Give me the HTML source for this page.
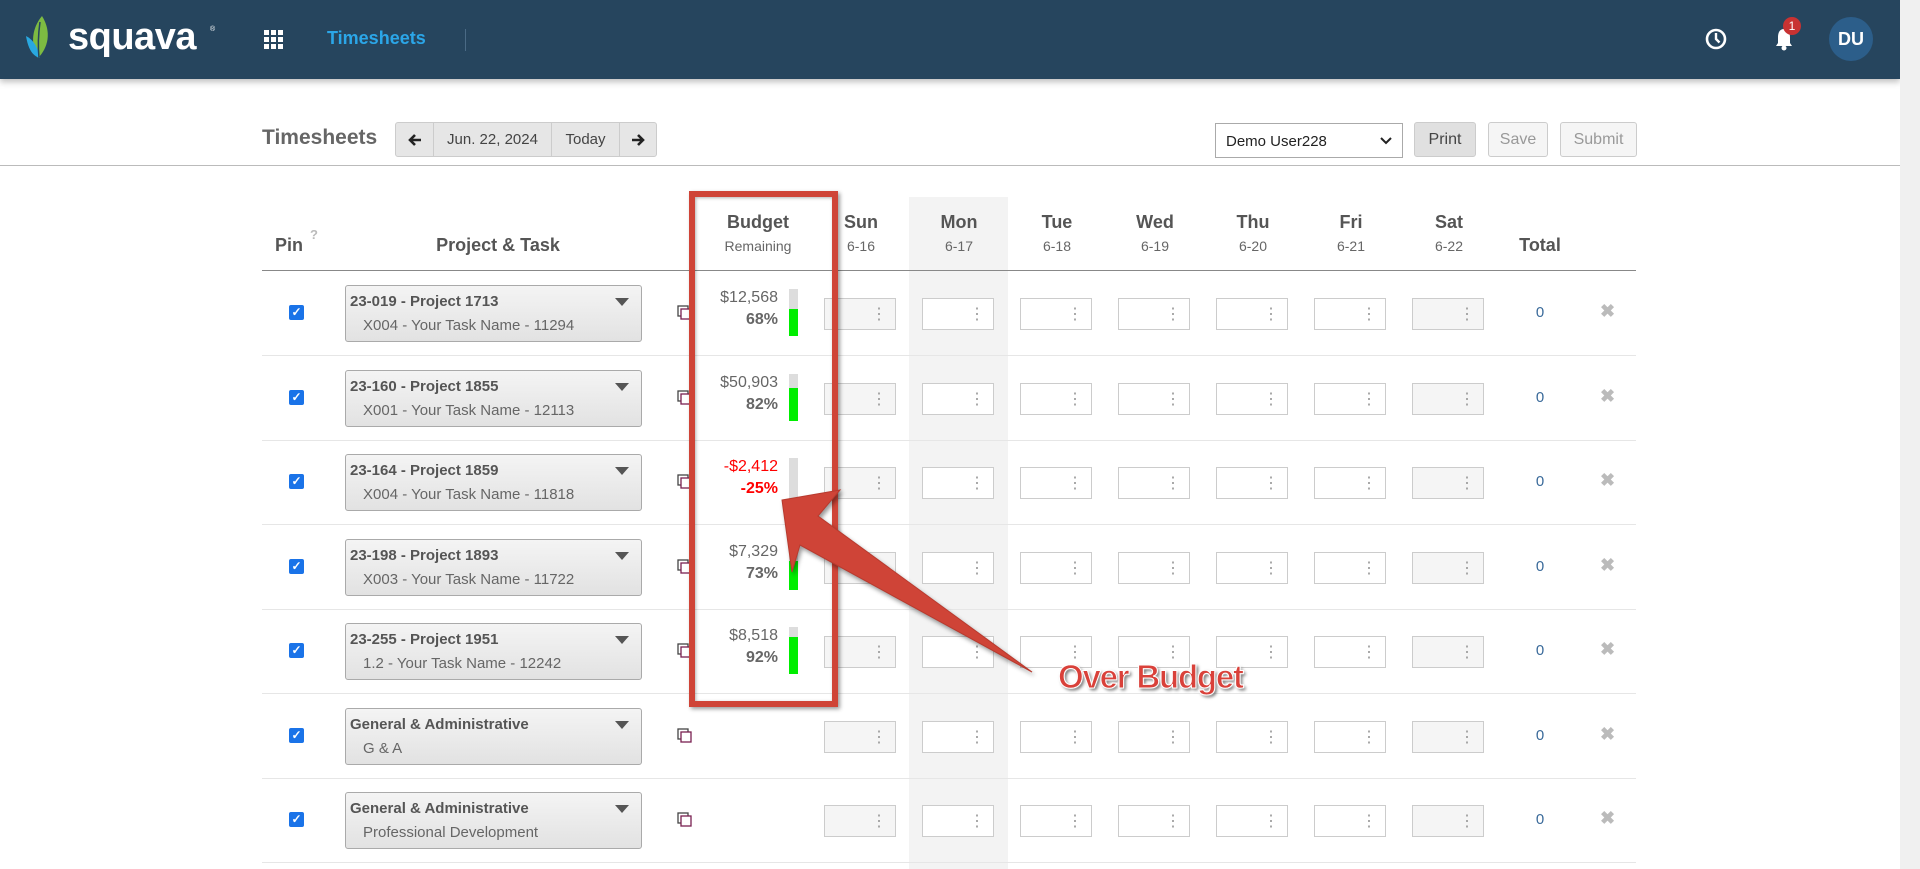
<!DOCTYPE html>
<html><head><meta charset="utf-8"><style>
*{box-sizing:border-box;margin:0;padding:0}
body{width:1920px;height:869px;overflow:hidden;background:#fff;font-family:"Liberation Sans",sans-serif;color:#555;position:relative}
.a{position:absolute}
.hdr{left:0;top:0;width:1900px;height:79px;background:#26455e;box-shadow:0 3px 6px rgba(0,0,0,.25)}
.sb{left:1900px;top:0;width:20px;height:869px;background:#f0f0f0}
.btn{border:1px solid #ccc;border-radius:3px;background:#f5f5f5;font-size:16px;color:#999;display:flex;align-items:center;justify-content:center}
.th{font-size:18px;font-weight:bold;color:#555;text-align:center}
.ts{font-size:14px;color:#666;text-align:center}
.dd{left:345px;width:297px;height:57px;border:1px solid #aaa;border-radius:3px;background:linear-gradient(#f4f4f4,#e2e2e2)}
.dd b{position:absolute;left:4px;top:7px;font-size:15px;color:#555}
.dd span{position:absolute;left:17px;top:31px;font-size:15px;color:#666}
.dd i{position:absolute;right:12px;top:12px;border-left:7px solid transparent;border-right:7px solid transparent;border-top:8px solid #555}
.cb{left:289px;width:15px;height:15px;background:#1a73e8;border-radius:2px;color:#fff;font-size:12px;line-height:15px;text-align:center;font-weight:bold}
.inp{width:72px;height:32px;border:1px solid #ccc;background:#fff}
.inp::after{content:"⋮";position:absolute;right:8px;top:5px;font-size:16px;color:#999}
.dis{background:#f5f5f5}
.line{left:262px;width:1374px;height:1px;background:#e6e6e6}
.bar{width:9px;background:#ddd}
.bar div{position:absolute;bottom:0;left:0;width:9px;background:#00ee00}
</style></head><body>
<div class="a hdr"></div>
<div class="a sb"></div>
<svg class="a" style="left:24px;top:14px" width="36" height="48" viewBox="0 0 36 48"><path d="M18 2C8 14 6 30 14 44C24 34 28 18 18 2Z" fill="#7dbb42"/><path d="M2 22C4 34 8 42 16 44C14 34 10 26 2 22Z" fill="#29a8e0"/><path d="M16 8C14 22 14 34 15 44" stroke="#26455e" stroke-width="1.5" fill="none"/></svg>
<div class="a" style="left:68px;top:16px;font-size:38px;font-weight:bold;color:#fff;letter-spacing:-0.5px">squava</div>
<div class="a" style="left:210px;top:26px;font-size:7px;color:#fff">®</div>
<svg class="a" style="left:264px;top:30px" width="20" height="20"><g fill="#fff"><rect x="0" y="0" width="5" height="5"/><rect x="7" y="0" width="5" height="5"/><rect x="14" y="0" width="5" height="5"/><rect x="0" y="7" width="5" height="5"/><rect x="7" y="7" width="5" height="5"/><rect x="14" y="7" width="5" height="5"/><rect x="0" y="14" width="5" height="5"/><rect x="7" y="14" width="5" height="5"/><rect x="14" y="14" width="5" height="5"/></g></svg>
<div class="a" style="left:327px;top:28px;font-size:18px;font-weight:bold;color:#2ba6e8">Timesheets</div>
<div class="a" style="left:465px;top:29px;width:1px;height:22px;background:#4a6a85"></div>
<svg class="a" style="left:1704px;top:27px" width="24" height="24" viewBox="0 0 24 24"><circle cx="12" cy="12" r="9" stroke="#fff" stroke-width="2.6" fill="none"/><path d="M12 6V12L15.5 15.5" stroke="#fff" stroke-width="2.4" fill="none"/></svg>
<svg class="a" style="left:1773px;top:27px" width="22" height="24" viewBox="0 0 22 24"><path d="M11 2C6 2 5 7 5 10V16L3 19H19L17 16V10C17 7 16 2 11 2Z" fill="#fff"/><circle cx="11" cy="21" r="2.5" fill="#fff"/></svg>
<div class="a" style="left:1783px;top:17px;width:18px;height:18px;border-radius:9px;background:#c83232;color:#fff;font-size:12px;text-align:center;line-height:18px">1</div>
<div class="a" style="left:1829px;top:17px;width:44px;height:44px;border-radius:22px;background:#2c5e8a;color:#fff;font-size:18px;font-weight:bold;text-align:center;line-height:44px">DU</div>

<div class="a" style="left:262px;top:126px;font-size:21px;font-weight:bold;color:#666">Timesheets</div>
<div class="a" style="left:395px;top:122px;width:262px;height:35px;border:1px solid #ccc;border-radius:3px;background:#e6e6e6;display:flex;font-size:15px;color:#444">
<div style="width:38px;border-right:1px solid #ccc;display:flex;align-items:center;justify-content:center"><svg width="14" height="14" viewBox="0 0 14 14"><path d="M13 7H3M7 2L2 7L7 12" stroke="#222" stroke-width="2.6" fill="none"/></svg></div>
<div style="width:118px;border-right:1px solid #ccc;text-align:center;line-height:33px">Jun. 22, 2024</div>
<div style="width:68px;border-right:1px solid #ccc;text-align:center;line-height:33px">Today</div>
<div style="flex:1;display:flex;align-items:center;justify-content:center"><svg width="14" height="14" viewBox="0 0 14 14"><path d="M1 7H11M7 2L12 7L7 12" stroke="#222" stroke-width="2.6" fill="none"/></svg></div></div>
<div class="a" style="left:1215px;top:123px;width:188px;height:35px;border:1px solid #aaa;font-size:15px;color:#222;padding:9px 10px">Demo User228<svg style="position:absolute;right:10px;top:13px" width="12" height="8" viewBox="0 0 12 8"><path d="M1 1L6 6L11 1" stroke="#222" stroke-width="2" fill="none"/></svg></div>
<div class="a btn" style="left:1414px;top:122px;width:62px;height:35px;background:#e0e0e0;color:#444">Print</div>
<div class="a btn" style="left:1488px;top:122px;width:60px;height:35px">Save</div>
<div class="a btn" style="left:1560px;top:122px;width:77px;height:35px">Submit</div>
<div class="a" style="left:0;top:165px;width:1900px;height:1px;background:#bbb"></div>

<div class="a" style="left:909px;top:197px;width:99px;height:672px;background:#f3f3f3"></div>

<div class="a th" style="left:275px;top:235px">Pin</div><div class="a" style="left:310px;top:227px;font-size:13px;color:#bbb;font-weight:bold">?</div>
<div class="a th" style="left:418px;top:235px;width:160px">Project &amp; Task</div>
<div class="a th" style="left:708px;top:212px;width:100px">Budget</div><div class="a ts" style="left:708px;top:238px;width:100px">Remaining</div>
<div class="a th" style="left:821px;top:212px;width:80px">Sun</div><div class="a ts" style="left:821px;top:238px;width:80px">6-16</div>
<div class="a th" style="left:919px;top:212px;width:80px">Mon</div><div class="a ts" style="left:919px;top:238px;width:80px">6-17</div>
<div class="a th" style="left:1017px;top:212px;width:80px">Tue</div><div class="a ts" style="left:1017px;top:238px;width:80px">6-18</div>
<div class="a th" style="left:1115px;top:212px;width:80px">Wed</div><div class="a ts" style="left:1115px;top:238px;width:80px">6-19</div>
<div class="a th" style="left:1213px;top:212px;width:80px">Thu</div><div class="a ts" style="left:1213px;top:238px;width:80px">6-20</div>
<div class="a th" style="left:1311px;top:212px;width:80px">Fri</div><div class="a ts" style="left:1311px;top:238px;width:80px">6-21</div>
<div class="a th" style="left:1409px;top:212px;width:80px">Sat</div><div class="a ts" style="left:1409px;top:238px;width:80px">6-22</div>
<div class="a th" style="left:1500px;top:235px;width:80px">Total</div>
<div class="a" style="left:262px;top:270px;width:1374px;height:1px;background:#888"></div>

<div id="rows"></div>
<script>
var R=[["23-019 - Project 1713","X004 - Your Task Name - 11294","$12,568","68%",68],
["23-160 - Project 1855","X001 - Your Task Name - 12113","$50,903","82%",82],
["23-164 - Project 1859","X004 - Your Task Name - 11818","-$2,412","-25%",-1],
["23-198 - Project 1893","X003 - Your Task Name - 11722","$7,329","73%",73],
["23-255 - Project 1951","1.2 - Your Task Name - 12242","$8,518","92%",92],
["General &amp; Administrative","G &amp; A","","",null],
["General &amp; Administrative","Professional Development","","",null]];
var h="";
for(var i=0;i<R.length;i++){var c=313+i*84.5,r=R[i];
h+='<div class="a cb" style="top:'+(c-8)+'px">✓</div>';
h+='<div class="a dd" style="top:'+(c-28)+'px"><b>'+r[0]+'</b><span>'+r[1]+'</span><i></i></div>';
h+='<svg class="a" style="left:677px;top:'+(c-8)+'px" width="16" height="16"><rect x="1" y="1" width="10" height="10" fill="none" stroke="#444" stroke-width="1.3"/><rect x="4" y="4" width="10" height="10" fill="#fff" stroke="#7a2050" stroke-width="1.3"/></svg>';
if(r[2]){var red=r[4]<0;
h+='<div class="a" style="left:690px;top:'+(c-24)+'px;width:88px;text-align:right;font-size:16px;color:'+(red?'#f00':'#666')+'">'+r[2]+'</div>';
h+='<div class="a" style="left:690px;top:'+(c-2)+'px;width:88px;text-align:right;font-size:16px;font-weight:bold;color:'+(red?'#f00':'#666')+'">'+r[3]+'</div>';
h+='<div class="a bar" style="left:789px;top:'+(c-24)+'px;height:47px">'+(r[4]>0?'<div style="height:'+Math.round(47*r[4]/100*0.85)+'px"></div>':'')+'</div>';}
for(var d=0;d<7;d++){h+='<div class="a inp'+((d==0||d==6)?' dis':'')+'" style="left:'+(824+d*98)+'px;top:'+(c-15)+'px"></div>';}
h+='<div class="a" style="left:1520px;top:'+(c-9)+'px;width:40px;text-align:center;font-size:15px;color:#3a6a9a">0</div>';
h+='<div class="a" style="left:1600px;top:'+(c-12)+'px;font-size:18px;color:#bbb;font-weight:bold">✖</div>';
h+='<div class="a line" style="top:'+(c+42)+'px"></div>';}
document.getElementById("rows").innerHTML=h;
</script>

<div class="a" style="left:689px;top:191px;width:149px;height:516px;border:6px solid #cf4437;box-shadow:2px 2px 4px rgba(0,0,0,.4),inset 1px 1px 3px rgba(0,0,0,.3)"></div>
<svg class="a" style="left:0;top:0" width="1920" height="869"><polygon points="782,500 840,490 818,516 1032,672 800,545 792,572" fill="#cf4437" stroke="#b83a2e" stroke-width="1" style="filter:drop-shadow(2px 3px 2px rgba(0,0,0,.4))"/></svg>
<div class="a" style="left:1058px;top:658px;font-size:33px;color:#d9413a;letter-spacing:-1.2px;-webkit-text-stroke:1px #fff;text-shadow:0 0 2px #fff,2px 2px 3px rgba(0,0,0,.6);font-weight:bold">Over Budget</div>
</body></html>
